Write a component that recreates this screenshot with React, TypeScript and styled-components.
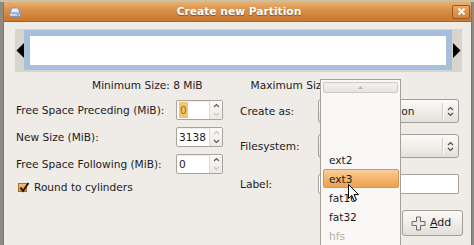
import React from "react";
import styled, { createGlobalStyle } from "styled-components";

const Global = createGlobalStyle`
  html, body { margin: 0; padding: 0; }
  body {
    background: #b9b4a2;
    font-family: "DejaVu Sans", "Noto Sans", sans-serif;
    font-size: 10.6px;
    color: #1c1c1c;
    overflow: hidden;
  }
`;

const Screen = styled.div`
  position: relative;
  width: 474px;
  height: 245px;
  box-sizing: border-box;
  padding: 2px 2px 0 3px;
  background: linear-gradient(180deg, #c9c2a0 0, #c9c2a0 2px, #8f8b83 2px);
  overflow: hidden;
`;

const Window = styled.div`
  width: 469px;
  height: 250px;
  box-sizing: border-box;
  border-left: 1px solid #7b766e;
  border-right: 1px solid #7b766e;
  border-radius: 3px 3px 0 0;
  background: #efebe7;
  display: flex;
  flex-direction: column;
`;

const TitleBar = styled.div`
  height: 19px;
  display: grid;
  grid-template-columns: 1fr auto 1fr;
  align-items: center;
  padding: 0 1px 0 4px;
  background: linear-gradient(180deg, #e9b071 0%, #d98f47 45%, #c8772f 100%);
  border-bottom: 1px solid #a9632a;
  border-radius: 3px 3px 0 0;
`;

const Title = styled.div`
  font-weight: bold;
  font-size: 10.7px;
  color: #ffffff;
  text-shadow: 0 1px 1px rgba(70, 30, 0, 0.55);
  white-space: nowrap;
`;

const TitleLeft = styled.div`
  display: flex;
  align-items: center;
`;

const TitleRight = styled.div`
  display: flex;
  justify-content: flex-end;
`;

const CloseButton = styled.div`
  width: 18px;
  height: 14px;
  box-sizing: border-box;
  border: 1px solid #9a5a22;
  border-radius: 2px;
  background: linear-gradient(180deg, #e7a867, #cf8440);
  display: flex;
  align-items: center;
  justify-content: center;
`;

const Content = styled.div`
  display: flex;
  flex-direction: column;
  padding: 7px 0 0 11px;
`;

const PartitionBar = styled.div`
  width: 447px;
  height: 43px;
  box-sizing: border-box;
  padding: 1px 0 2px;
  background: #d8d4ce;
  display: flex;
  align-items: stretch;
`;

const ArrowSlot = styled.div<{ $w: number }>`
  width: ${(p) => p.$w}px;
  display: flex;
  align-items: center;
  justify-content: center;
`;

const BlueFrame = styled.div`
  flex: 1;
  padding: 6px 6px 5px;
  background: #a5bfdc;
  display: flex;
`;

const WhiteArea = styled.div`
  flex: 1;
  background: #ffffff;
`;

const InfoRow = styled.div`
  display: flex;
  gap: 48px;
  margin-top: 7px;
  padding-left: 77px;
  line-height: 12px;
  white-space: nowrap;
`;

const Main = styled.div`
  display: flex;
  align-items: flex-start;
  margin-top: 9px;
  padding-left: 1px;
`;

const LeftColumn = styled.div`
  display: flex;
  flex-direction: column;
`;

const LeftGrid = styled.div`
  display: grid;
  grid-template-columns: 160px 47px;
  grid-auto-rows: 20px;
  row-gap: 7px;
  align-items: center;
`;

const Label = styled.span`
  white-space: nowrap;
  line-height: 12px;
`;

const SpinBox = styled.div`
  height: 20px;
  box-sizing: border-box;
  border: 1px solid #a8a39b;
  border-radius: 2px;
  background: #ffffff;
  display: flex;
  box-shadow: inset 0 1px 1px rgba(0, 0, 0, 0.08);
`;

const SpinValue = styled.div`
  flex: 1;
  display: flex;
  align-items: center;
  padding-left: 2px;
  line-height: 12px;
`;

const Selected = styled.span`
  background: #f2c56f;
  color: #b0690f;
  padding: 2px 1px;
`;

const SpinButtons = styled.div`
  width: 12px;
  border-left: 1px solid #dcd8d2;
  background: linear-gradient(180deg, #fbfaf9, #ece9e5);
  display: flex;
  flex-direction: column;
`;

const SpinHalf = styled.div`
  flex: 1;
  display: flex;
  align-items: center;
  justify-content: center;
`;

const CheckRow = styled.div`
  display: flex;
  align-items: center;
  gap: 7px;
  height: 18px;
  margin-top: 4px;
  padding-left: 2px;
`;

const CheckBox = styled.div`
  position: relative;
  width: 9px;
  height: 9px;
  box-sizing: border-box;
  border: 1px solid #b56d22;
  background: linear-gradient(180deg, #f6bf76, #e38f35);
`;

const CheckMark = styled.svg`
  position: absolute;
  left: 0px;
  top: -2px;
`;

const RightColumn = styled.div`
  display: flex;
  flex-direction: column;
  margin-left: 17px;
  margin-top: -1px;
  width: 219px;
`;

const FormRow = styled.div<{ $h: number; $gap: number }>`
  display: flex;
  align-items: center;
  height: ${(p) => p.$h}px;
  margin-top: ${(p) => p.$gap}px;
`;

const RowLabel = styled.span`
  width: 78px;
  white-space: nowrap;
  line-height: 12px;
`;

const Combo = styled.div`
  width: 141px;
  height: 24px;
  box-sizing: border-box;
  border: 1px solid #a29d95;
  border-radius: 3px;
  background: linear-gradient(180deg, #fbfaf9 0%, #f1eeeb 50%, #e4e0da 100%);
  display: flex;
  align-items: center;
  padding-left: 7px;
`;

const ComboText = styled.span`
  flex: 1;
  white-space: nowrap;
  line-height: 12px;
`;

const ComboSep = styled.div`
  width: 1px;
  height: 16px;
  background: #cfcac3;
  box-shadow: 1px 0 0 #ffffff;
`;

const ComboArrow = styled.div`
  width: 15px;
  display: flex;
  justify-content: center;
`;

const Entry = styled.div`
  width: 141px;
  height: 20px;
  box-sizing: border-box;
  border: 1px solid #a8a39b;
  border-radius: 2px;
  background: #ffffff;
`;

const AddButton = styled.div`
  margin-left: auto;
  margin-right: -4px;
  width: 61px;
  height: 26px;
  box-sizing: border-box;
  border: 1px solid #a29d95;
  border-radius: 3px;
  background: linear-gradient(180deg, #fbfaf9 0%, #f0edea 50%, #e2ded8 100%);
  display: flex;
  align-items: center;
  gap: 4px;
  padding-left: 8px;
  line-height: 12px;
  font-size: 11px;
`;

const Mnemonic = styled.span`
  text-decoration: underline;
`;

const Menu = styled.div`
  position: absolute;
  left: 320px;
  top: 79px;
  width: 81px;
  height: 175px;
  box-sizing: border-box;
  border: 1px solid #a6a098;
  background: #f9f8f6;
  display: flex;
  flex-direction: column;
  padding: 2px 1px 0;
`;

const ScrollArrow = styled.div`
  height: 11px;
  margin: 0 1px;
  box-sizing: border-box;
  border: 1px solid #cdc9c3;
  border-radius: 2px;
  background: linear-gradient(180deg, #f3f1ee, #e7e4df);
  display: flex;
  align-items: center;
  justify-content: center;
`;

const MenuList = styled.div`
  margin-top: 57px;
  display: flex;
  flex-direction: column;
`;

const MenuItem = styled.div<{ $active?: boolean; $disabled?: boolean }>`
  height: 19px;
  box-sizing: border-box;
  display: flex;
  align-items: center;
  padding-left: 5px;
  margin-left: 1px;
  line-height: 12px;
  color: ${(p) => (p.$disabled ? "#b3afa9" : "#1c1c1c")};
  border: 1px solid ${(p) => (p.$active ? "#d8954d" : "transparent")};
  border-radius: 2px;
  background: ${(p) =>
    p.$active ? "linear-gradient(180deg, #f9cf9c 0%, #f3b56f 50%, #eca253 100%)" : "transparent"};
`;

const Cursor = styled.svg`
  position: absolute;
  left: 348px;
  top: 184px;
`;

const Chevron = ({ up, color }: { up: boolean; color: string }) => (
  <svg width="7" height="5" viewBox="0 0 7 5">
    <path
      d={up ? "M1 4 L3.5 1.5 L6 4" : "M1 1 L3.5 3.5 L6 1"}
      stroke={color}
      strokeWidth="1.1"
      fill="none"
    />
  </svg>
);

const Spin = ({
  value,
  upOn,
  downOn,
  selected,
}: {
  value: string;
  upOn: boolean;
  downOn: boolean;
  selected?: boolean;
}) => (
  <SpinBox>
    <SpinValue>{selected ? <Selected>{value}</Selected> : value}</SpinValue>
    <SpinButtons>
      <SpinHalf>
        <Chevron up color={upOn ? "#5a5754" : "#c9c5c0"} />
      </SpinHalf>
      <SpinHalf>
        <Chevron up={false} color={downOn ? "#5a5754" : "#c9c5c0"} />
      </SpinHalf>
    </SpinButtons>
  </SpinBox>
);

const UpDown = () => (
  <svg width="7" height="11" viewBox="0 0 7 11">
    <path d="M1 4 L3.5 1.5 L6 4 M1 7 L3.5 9.5 L6 7" stroke="#4e4b48" strokeWidth="1.1" fill="none" />
  </svg>
);

export default function App() {
  return (
    <>
      <Global />
      <Screen>
        <Window>
          <TitleBar>
            <TitleLeft>
              <svg width="14" height="12" viewBox="0 0 14 12">
                <path d="M2 7 L4 2 H10 L12 7 Z" fill="#e8eef7" stroke="#7b8fb0" strokeWidth="0.8" />
                <rect x="1.5" y="7" width="11" height="3.5" rx="1" fill="#c9d6ea" stroke="#7b8fb0" strokeWidth="0.8" />
                <circle cx="10" cy="8.8" r="0.8" fill="#4d6fa3" />
              </svg>
            </TitleLeft>
            <Title>Create new Partition</Title>
            <TitleRight>
              <CloseButton>
                <svg width="9" height="9" viewBox="0 0 9 9">
                  <path d="M1.5 1.5 L7.5 7.5 M7.5 1.5 L1.5 7.5" stroke="#ffffff" strokeWidth="2" />
                </svg>
              </CloseButton>
            </TitleRight>
          </TitleBar>
          <Content>
            <PartitionBar>
              <ArrowSlot $w={9}>
                <svg width="8" height="15" viewBox="0 0 8 15">
                  <path d="M8 0 L0.5 7.5 L8 15 Z" fill="#000" />
                </svg>
              </ArrowSlot>
              <BlueFrame>
                <WhiteArea />
              </BlueFrame>
              <ArrowSlot $w={10}>
                <svg width="8" height="15" viewBox="0 0 8 15">
                  <path d="M0 0 L7.5 7.5 L0 15 Z" fill="#000" />
                </svg>
              </ArrowSlot>
            </PartitionBar>
            <InfoRow>
              <span>Minimum Size: 8 MiB</span>
              <span>Maximum Size: 3138 MiB</span>
            </InfoRow>
            <Main>
              <LeftColumn>
                <LeftGrid>
                  <Label>Free Space Preceding (MiB):</Label>
                  <Spin value="0" upOn downOn={false} selected />
                  <Label>New Size (MiB):</Label>
                  <Spin value="3138" upOn={false} downOn />
                  <Label>Free Space Following (MiB):</Label>
                  <Spin value="0" upOn downOn={false} />
                </LeftGrid>
                <CheckRow>
                  <CheckBox>
                    <CheckMark width="11" height="11" viewBox="0 0 11 11">
                      <path d="M1.5 5.5 L4 9 L9.5 1" stroke="#111" strokeWidth="1.8" fill="none" />
                    </CheckMark>
                  </CheckBox>
                  <Label>Round to cylinders</Label>
                </CheckRow>
              </LeftColumn>
              <RightColumn>
                <FormRow $h={24} $gap={0}>
                  <RowLabel>Create as:</RowLabel>
                  <Combo>
                    <ComboText>Primary Partition</ComboText>
                    <ComboSep />
                    <ComboArrow>
                      <UpDown />
                    </ComboArrow>
                  </Combo>
                </FormRow>
                <FormRow $h={24} $gap={11}>
                  <RowLabel>Filesystem:</RowLabel>
                  <Combo>
                    <ComboText>ext3</ComboText>
                    <ComboSep />
                    <ComboArrow>
                      <UpDown />
                    </ComboArrow>
                  </Combo>
                </FormRow>
                <FormRow $h={20} $gap={16}>
                  <RowLabel>Label:</RowLabel>
                  <Entry />
                </FormRow>
                <FormRow $h={26} $gap={16}>
                  <AddButton>
                    <svg width="15" height="15" viewBox="0 0 15 15">
                      <path
                        d="M5.5 1 H9.5 V5.5 H14 V9.5 H9.5 V14 H5.5 V9.5 H1 V5.5 H5.5 Z"
                        fill="#eceae6"
                        stroke="#6b6864"
                        strokeWidth="1"
                      />
                    </svg>
                    <span>
                      <Mnemonic>A</Mnemonic>dd
                    </span>
                  </AddButton>
                </FormRow>
              </RightColumn>
            </Main>
          </Content>
        </Window>
        <Menu>
          <ScrollArrow>
            <svg width="5" height="3" viewBox="0 0 5 3">
              <path d="M0 3 L2.5 0 L5 3 Z" fill="#b9b5af" />
            </svg>
          </ScrollArrow>
          <MenuList>
            <MenuItem>ext2</MenuItem>
            <MenuItem $active>ext3</MenuItem>
            <MenuItem>fat16</MenuItem>
            <MenuItem>fat32</MenuItem>
            <MenuItem $disabled>hfs</MenuItem>
          </MenuList>
        </Menu>
        <Cursor width="12" height="18" viewBox="0 0 12 18">
          <path
            d="M0.5 0.5 L0.5 14.5 L3.8 11.4 L6.2 16.8 L8.4 15.8 L6 10.6 L10.5 10.6 Z"
            fill="#ffffff"
            stroke="#000000"
            strokeWidth="1"
            strokeLinejoin="round"
          />
        </Cursor>
      </Screen>
    </>
  );
}
